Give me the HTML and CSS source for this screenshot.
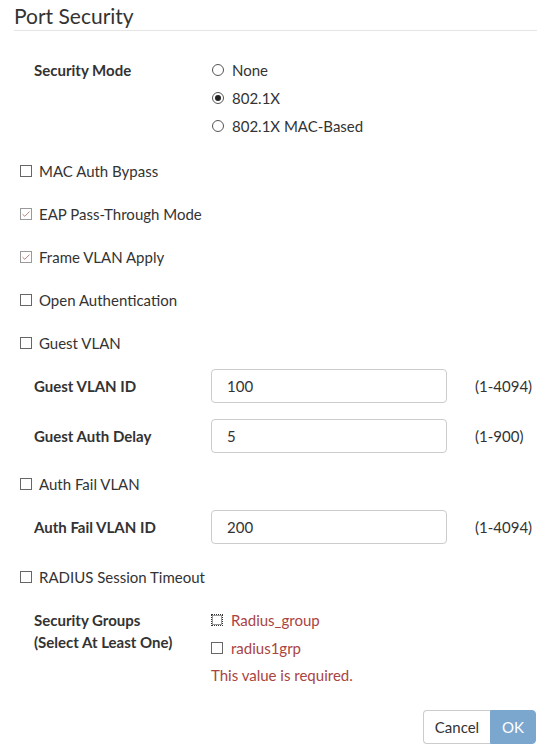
FILE: index.html
```html
<!DOCTYPE html>
<html>
<head>
<meta charset="utf-8">
<link rel="stylesheet" href="styles.css">
</head>
<body>
<div class="panel">
  <div class="header">Port Security</div>

  <div class="mode-row">
    <div class="label bold">Security Mode</div>
    <div class="radios">
      <div class="radio-line"><span class="radio"></span><span>None</span></div>
      <div class="radio-line"><span class="radio on"></span><span>802.1X</span></div>
      <div class="radio-line"><span class="radio"></span><span>802.1X MAC-Based</span></div>
    </div>
  </div>

  <div class="check-row first"><span class="box"></span><span>MAC Auth Bypass</span></div>
  <div class="check-row"><span class="box checked"><svg width="12" height="12" viewBox="0 0 12 12"><path d="M2.5 6.2 L4.8 8.3 L9.5 3.6" fill="none" stroke="#b5837a" stroke-width="1"/></svg></span><span>EAP Pass-Through Mode</span></div>
  <div class="check-row"><span class="box checked"><svg width="12" height="12" viewBox="0 0 12 12"><path d="M2.5 6.2 L4.8 8.3 L9.5 3.6" fill="none" stroke="#b5837a" stroke-width="1"/></svg></span><span>Frame VLAN Apply</span></div>
  <div class="check-row"><span class="box"></span><span>Open Authentication</span></div>
  <div class="check-row"><span class="box"></span><span>Guest VLAN</span></div>

  <div class="input-row top5">
    <div class="label bold">Guest VLAN ID</div>
    <div class="input">100</div>
    <div class="range">(1-4094)</div>
  </div>
  <div class="input-row top16">
    <div class="label bold">Guest Auth Delay</div>
    <div class="input">5</div>
    <div class="range">(1-900)</div>
  </div>

  <div class="check-row gap9"><span class="box"></span><span>Auth Fail VLAN</span></div>

  <div class="input-row top5">
    <div class="label bold">Auth Fail VLAN ID</div>
    <div class="input">200</div>
    <div class="range">(1-4094)</div>
  </div>

  <div class="check-row gap11"><span class="box"></span><span>RADIUS Session Timeout</span></div>

  <div class="groups-row">
    <div class="label bold groups-label">Security Groups<br>(Select At Least One)</div>
    <div class="groups">
      <div class="group-line"><span class="box focus"></span><span class="err">Radius_group</span></div>
      <div class="group-line"><span class="box"></span><span class="err">radius1grp</span></div>
      <div class="err-msg">This value is required.</div>
    </div>
  </div>

  <div class="actions">
    <button class="btn cancel">Cancel</button>
    <button class="btn ok">OK</button>
  </div>
</div>
</body>
</html>
```

FILE: styles.css
```css
html, body {
  margin: 0;
  padding: 0;
  background: #ffffff;
}
body {
  font-family: Lato, "Open Sans", sans-serif;
  font-size: 15px;
  color: #333333;
}
.panel {
  padding: 0 17px 0 14px;
}
.header {
  font-size: 21px;
  line-height: 24px;
  padding-top: 4px;
  height: 26px;
  border-bottom: 1px solid #e5e5e5;
  color: #333;
}
.bold {
  font-weight: bold;
}
.label {
  width: 177px;
  flex: none;
}
.mode-row {
  display: flex;
  margin-top: 25px;
  padding-left: 20px;
}
.mode-row .label {
  line-height: 28px;
}
.radios {
  display: flex;
  flex-direction: column;
}
.radio-line {
  display: flex;
  align-items: center;
  height: 28px;
  gap: 8px;
  padding-left: 1px;
}
.radio {
  width: 10px;
  height: 10px;
  border: 1px solid #555;
  border-radius: 50%;
  display: flex;
  align-items: center;
  justify-content: center;
  box-sizing: content-box;
}
.radio.on::after {
  content: "";
  width: 6px;
  height: 6px;
  border-radius: 50%;
  background: #222;
}
.check-row {
  display: flex;
  align-items: center;
  height: 43px;
  gap: 7px;
  padding-left: 6px;
}
.check-row.first {
  margin-top: 9px;
}
.check-row.gap9 {
  margin-top: 9px;
}
.check-row.gap11 {
  margin-top: 11px;
}
.box {
  width: 10px;
  height: 10px;
  border: 1px solid #666;
  flex: none;
  display: flex;
  align-items: center;
  justify-content: center;
  box-sizing: content-box;
  position: relative;
}
.box.checked {
  border-color: #999;
}
.box svg {
  position: absolute;
  left: -1px;
  top: -1px;
}
.box.focus {
  border: 1px dotted #333;
  box-shadow: inset 0 0 0 1px #999;
}
.input-row {
  display: flex;
  align-items: center;
  padding-left: 20px;
}
.top5 {
  margin-top: 5px;
}
.top16 {
  margin-top: 16px;
}
.input {
  width: 236px;
  height: 34px;
  box-sizing: border-box;
  border: 1px solid #cccccc;
  border-radius: 4px;
  padding-left: 15px;
  line-height: 32px;
  color: #333;
}
.range {
  margin-left: 28px;
}
.groups-row {
  display: flex;
  padding-left: 20px;
  margin-top: 10px;
}
.groups-label {
  line-height: 22px;
  padding-top: 1px;
}
.groups {
  display: flex;
  flex-direction: column;
  margin-top: -2px;
}
.group-line {
  display: flex;
  align-items: center;
  height: 28px;
  gap: 8px;
}
.err {
  color: #a94442;
}
.err-msg {
  color: #a94442;
  line-height: 26px;
}
.actions {
  display: flex;
  justify-content: flex-end;
  margin-top: 22px;
  padding-right: 1px;
}
.btn {
  font-family: Lato, "Open Sans", sans-serif;
  font-size: 15px;
  height: 34px;
  margin: 0;
  cursor: pointer;
}
.cancel {
  width: 67px;
  background: #fff;
  color: #333;
  border: 1px solid #cccccc;
  border-right: none;
  border-radius: 4px 0 0 4px;
}
.ok {
  width: 46px;
  background: #7ba7cf;
  color: #fff;
  border: 1px solid #7ba7cf;
  border-radius: 0 4px 4px 0;
}
```
